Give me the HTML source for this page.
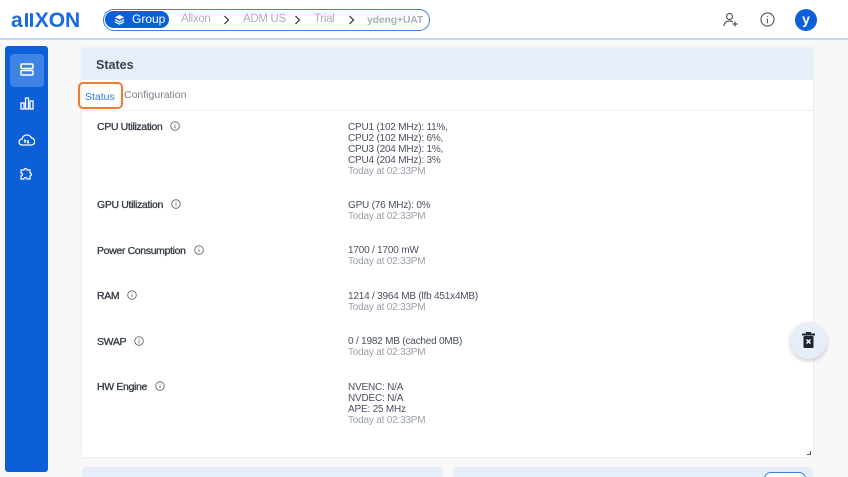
<!DOCTYPE html>
<html><head><style>
*{margin:0;padding:0;box-sizing:border-box}
html,body{width:848px;height:477px;overflow:hidden}
body{background:#f8f8f9;font-family:"Liberation Sans",sans-serif;position:relative}
.top{position:absolute;left:0;top:0;width:848px;height:40px;background:#fff;border-bottom:2px solid #c4d8f2}
.logo{position:absolute;left:11px;top:9px;font-size:21px;font-weight:bold;color:#1a6ae0;letter-spacing:0px}
.bc{position:absolute;left:103px;top:9px;width:327px;height:22px;border:1.5px solid #3d7fe0;border-radius:11px;background:#fff}
.grp{position:absolute;left:1px;top:1px;width:64px;height:17px;background:#0d5fd8;border-radius:9px;color:#fff;font-size:12px;line-height:17px;padding-left:27px}
.bc span.t{position:absolute;top:3px;font-size:11.5px;color:#aab0ba;letter-spacing:-0.3px}
.bc svg.c{position:absolute;top:5px}
.side{position:absolute;left:5px;top:46px;width:43px;height:426px;background:#0d5fd8;border-radius:3px}
.sel{position:absolute;left:5px;top:8px;width:34px;height:33px;background:#3e82e6;border-radius:4px}
.card{position:absolute;left:82px;top:48px;width:731px;height:409px;background:#fff;box-shadow:0 0 3px rgba(0,0,0,.08)}
.ch{height:32px;background:#e6eef9;padding:10px 14px;font-weight:bold;font-size:12.5px;color:#3a4150}
.tabs{height:31px;border-bottom:1px solid #eceef2;position:relative}
.st{position:absolute;left:-4px;top:2px;width:45px;height:27px;border:2px solid #f07a30;border-radius:5px;color:#2a7ae2;font-size:10.5px;padding:7px 0 0 5px}
.cf{position:absolute;left:42px;top:9px;font-size:10.5px;color:#7a808a}
.l{position:absolute;left:15px;font-size:10.5px;color:#333a45;-webkit-text-stroke:0.3px #333a45;letter-spacing:-0.35px}
.l svg{margin-left:8px;vertical-align:-1px}
.v{position:absolute;left:266px;font-size:10px;color:#4a5060;line-height:11px;letter-spacing:-0.2px}
.v .g{color:#9aa0aa}
.fab{position:absolute;left:790px;top:322px;width:37px;height:37px;border-radius:50%;background:#e6eef9;box-shadow:0 2px 4px rgba(0,0,0,.2)}
.bot{position:absolute;top:467px;height:12px;background:#e6eef9;border-radius:4px}
</style></head><body>
<div class="top">
<div class="logo">a<span style="display:inline-block;width:3px;height:14px;background:#1a6ae0;margin:0 2px 0 2px;border-radius:2px"></span><span style="display:inline-block;width:3px;height:14px;background:#1a6ae0;margin-right:2px;border-radius:2px"></span>XON</div>
<div class="bc"><div class="grp"><svg style="position:absolute;left:9px;top:3px" width="11" height="11" viewBox="0 0 12 12"><path d="M6 1L11 3.5 6 6 1 3.5Z" fill="#fff"/><path d="M1 6l5 2.5L11 6M1 8.5L6 11l5-2.5" stroke="#fff" fill="none" stroke-width="1.3"/></svg>Group</div>
<span class="t" style="left:77px">Allxon</span><svg class="c" style="left:119px" width="7" height="10" viewBox="0 0 7 10"><path d="M1.5 1l4 4-4 4" stroke="#444" fill="none" stroke-width="1.3"/></svg>
<span class="t" style="left:139px">ADM US</span><svg class="c" style="left:190px" width="7" height="10" viewBox="0 0 7 10"><path d="M1.5 1l4 4-4 4" stroke="#444" fill="none" stroke-width="1.3"/></svg>
<span class="t" style="left:210px">Trial</span><svg class="c" style="left:244px" width="7" height="10" viewBox="0 0 7 10"><path d="M1.5 1l4 4-4 4" stroke="#444" fill="none" stroke-width="1.3"/></svg>
<span class="t" style="left:263px;font-weight:bold;font-size:10.5px;top:4px;letter-spacing:-0.2px">ydeng+UAT</span></div>
<svg style="position:absolute;left:723px;top:12px" width="16" height="16" viewBox="0 0 16 16" fill="none" stroke="#555" stroke-width="1.2"><circle cx="6.5" cy="4.5" r="3"/><path d="M1 14c0-3 2.5-5 5.5-5 1.5 0 2.5.4 3.3 1M12 9.5v5M9.5 12h5"/></svg>
<svg style="position:absolute;left:760px;top:12px" width="15" height="15" viewBox="0 0 16 16" fill="none" stroke="#555" stroke-width="1.2"><circle cx="8" cy="8" r="7"/><path d="M8 7v5M8 4.5v1"/></svg>
<div style="position:absolute;left:795px;top:9px;width:22px;height:22px;border-radius:50%;background:#0d5fd8;color:#fff;font-weight:bold;font-size:14px;text-align:center;line-height:20px">y</div>
</div>
<div class="side"><div class="sel"></div>
<svg style="position:absolute;left:15px;top:17px" width="14" height="13" viewBox="0 0 14 13" fill="none" stroke="#fff" stroke-width="1.5"><rect x="1" y="1" width="12" height="4.5" rx="1"/><rect x="1" y="7.5" width="12" height="4.5" rx="1"/></svg>
<svg style="position:absolute;left:15px;top:51px" width="14" height="13" viewBox="0 0 14 13" fill="none" stroke="#fff" stroke-width="1.3"><rect x="1" y="6" width="3" height="6"/><rect x="5.5" y="1" width="3" height="11"/><rect x="10" y="4" width="3" height="8"/></svg>
<svg style="position:absolute;left:13px;top:87px" width="17" height="13" viewBox="0 0 17 13" fill="none" stroke="#fff" stroke-width="1.3"><path d="M4 12a3 3 0 010-6 5 5 0 019.5-1 3.3 3.3 0 01-.5 7z"/><path d="M7 10V7M6 8l1-1 1 1M10 7v3M9 9l1 1 1-1"/></svg>
<svg style="position:absolute;left:15px;top:120px" width="14" height="14" viewBox="0 0 14 14" fill="none" stroke="#fff" stroke-width="1.2"><path d="M1 4h3a1.5 1.5 0 113 0h3v3a1.5 1.5 0 110 3v3H7a1.5 1.5 0 10-3 0H1v-3a1.5 1.5 0 100-3z"/></svg>
</div>
<div class="card">
<div class="ch">States</div>
<div class="tabs"><div class="st">Status</div><div class="cf">Configuration</div></div>
<div class="l" style="top:73px">CPU Utilization<svg width="10" height="10" viewBox="0 0 10 10" fill="none" stroke="#666" stroke-width="0.9"><circle cx="5" cy="5" r="4.3"/><path d="M5 4.3v3M5 2.5v.8"/></svg></div>
<div class="v" style="top:74px">CPU1 (102 MHz): 11%,<br>CPU2 (102 MHz): 6%,<br>CPU3 (204 MHz): 1%,<br>CPU4 (204 MHz): 3%<br><span class="g">Today at 02:33PM</span></div>
<div class="l" style="top:151px">GPU Utilization<svg width="10" height="10" viewBox="0 0 10 10" fill="none" stroke="#666" stroke-width="0.9"><circle cx="5" cy="5" r="4.3"/><path d="M5 4.3v3M5 2.5v.8"/></svg></div>
<div class="v" style="top:152px">GPU (76 MHz): 0%<br><span class="g">Today at 02:33PM</span></div>
<div class="l" style="top:197px">Power Consumption<svg width="10" height="10" viewBox="0 0 10 10" fill="none" stroke="#666" stroke-width="0.9"><circle cx="5" cy="5" r="4.3"/><path d="M5 4.3v3M5 2.5v.8"/></svg></div>
<div class="v" style="top:197px">1700 / 1700 mW<br><span class="g">Today at 02:33PM</span></div>
<div class="l" style="top:242px">RAM<svg width="10" height="10" viewBox="0 0 10 10" fill="none" stroke="#666" stroke-width="0.9"><circle cx="5" cy="5" r="4.3"/><path d="M5 4.3v3M5 2.5v.8"/></svg></div>
<div class="v" style="top:243px">1214 / 3964 MB (lfb 451x4MB)<br><span class="g">Today at 02:33PM</span></div>
<div class="l" style="top:288px">SWAP<svg width="10" height="10" viewBox="0 0 10 10" fill="none" stroke="#666" stroke-width="0.9"><circle cx="5" cy="5" r="4.3"/><path d="M5 4.3v3M5 2.5v.8"/></svg></div>
<div class="v" style="top:288px">0 / 1982 MB (cached 0MB)<br><span class="g">Today at 02:33PM</span></div>
<div class="l" style="top:333px">HW Engine<svg width="10" height="10" viewBox="0 0 10 10" fill="none" stroke="#666" stroke-width="0.9"><circle cx="5" cy="5" r="4.3"/><path d="M5 4.3v3M5 2.5v.8"/></svg></div>
<div class="v" style="top:334px">NVENC: N/A<br>NVDEC: N/A<br>APE: 25 MHz<br><span class="g">Today at 02:33PM</span></div>
<div style="position:absolute;right:2px;bottom:2px;width:4px;height:4px;border-right:1px solid #555;border-bottom:1px solid #555"></div>
</div>
<div class="fab"><svg style="position:absolute;left:12px;top:10px" width="13" height="16" viewBox="0 0 13 16"><rect x="0" y="1.5" width="13" height="2" fill="#1e2430"/><rect x="4" y="0" width="5" height="2" fill="#1e2430"/><rect x="1.5" y="4" width="10" height="12" rx="1" fill="#1e2430"/><path d="M4.5 7.5l4 4M8.5 7.5l-4 4" stroke="#fff" stroke-width="1.5"/></svg></div>
<div class="bot" style="left:82px;width:361px"></div>
<div class="bot" style="left:453px;width:360px;overflow:hidden"><div style="position:absolute;left:311px;top:5px;width:42px;height:14px;border:1.5px solid #3d7fe0;border-radius:8px;background:#fff"></div></div>
</body></html>
